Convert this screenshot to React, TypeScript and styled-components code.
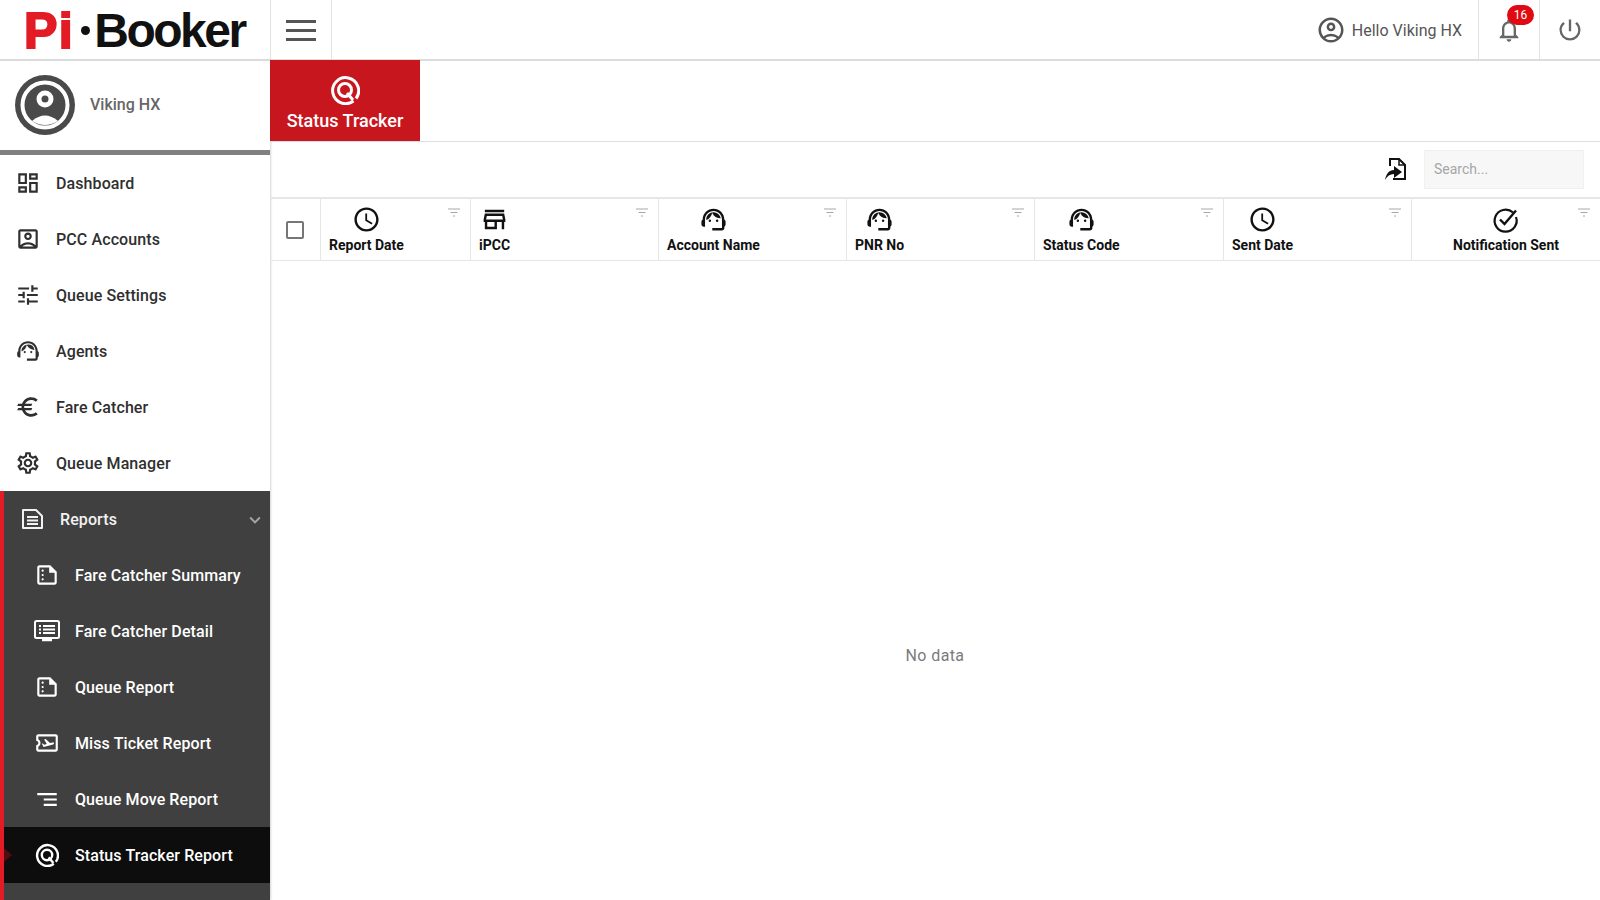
import styled, { createGlobalStyle } from 'styled-components'
import {
  MdOutlineAccountBox,
  MdOutlineAccountCircle,
  MdOutlineAirplaneTicket,
  MdOutlineDashboard,
  MdOutlineEuro,
  MdOutlineKeyboardArrowDown,
  MdOutlineNotifications,
  MdOutlinePowerSettingsNew,
  MdOutlineSchedule,
  MdOutlineSegment,
  MdOutlineSettings,
  MdOutlineStore,
  MdOutlineSummarize,
  MdOutlineSupportAgent,
  MdOutlineTune,
} from 'react-icons/md'
import type { ComponentType } from 'react'

type IconType = ComponentType<{ size?: number }>

const GlobalStyle = createGlobalStyle`
  html, body {
    margin: 0;
    height: 100%;
    overflow: hidden;
    background: #fff;
    font-family: Roboto, "Liberation Sans", sans-serif;
  }
  * { box-sizing: border-box; }
`

const Page = styled.div`
  width: 1600px;
  height: 900px;
  display: flex;
  flex-direction: column;
  overflow: hidden;
`

const Header = styled.header`
  height: 61px;
  flex: none;
  display: flex;
  align-items: stretch;
  border-bottom: 2px solid #dcdcdc;
  background: #fff;
`

const LogoCell = styled.div`
  width: 271px;
  display: flex;
  align-items: center;
  padding: 2px 0 0 24px;
  border-right: 1px solid #e2e2e2;
  font-family: "Liberation Sans", Arial, sans-serif;
  font-weight: 700;
`

const LogoRed = styled.span`
  color: #e31b25;
  font-size: 50px;
  letter-spacing: 1.5px;
  -webkit-text-stroke: 2px #e31b25;
`

const LogoDot = styled.span`
  width: 9px;
  height: 9px;
  margin: 0 4px 0 7px;
  border-radius: 50%;
  background: #111;
`

const LogoBlack = styled.span`
  color: #111;
  font-size: 48px;
  letter-spacing: -2.5px;
`

const MenuCell = styled.button`
  width: 61px;
  padding: 1px 0 0;
  border: 0;
  border-right: 1px solid #e2e2e2;
  background: none;
  display: flex;
  flex-direction: column;
  justify-content: center;
  align-items: center;
  gap: 6px;
`

const MenuBar = styled.span`
  width: 30px;
  height: 3px;
  background: #555;
`

const HeaderSpace = styled.div`
  flex: 1;
`

const Hello = styled.div`
  display: flex;
  align-items: center;
  gap: 6px;
  padding: 1px 16px 0 0;
  color: #555;
  font-size: 16px;
`

const HeaderCell = styled.div`
  position: relative;
  width: 61px;
  display: flex;
  align-items: center;
  justify-content: center;
  border-left: 1px solid #e2e2e2;
  color: #666;
`

const Badge = styled.span`
  position: absolute;
  top: 5px;
  left: 28px;
  width: 27px;
  height: 20px;
  border-radius: 10px;
  background: #e00b12;
  color: #fff;
  font-size: 12px;
  line-height: 20px;
  text-align: center;
`

const Body = styled.div`
  flex: 1;
  min-height: 0;
  display: flex;
`

const Sidebar = styled.aside`
  width: 270px;
  flex: none;
  display: flex;
  flex-direction: column;
  box-shadow: 1px 0 2px #d5d5d5;
  background: #fff;
`

const Profile = styled.div`
  height: 94px;
  flex: none;
  display: flex;
  align-items: center;
  gap: 15px;
  padding: 0 0 2px 15px;
  border-bottom: 5px solid #808080;
  color: #666;
  font-size: 16px;
  font-weight: 500;
`

const MenuList = styled.nav`
  flex: none;
`

const MenuItem = styled.div`
  height: 56px;
  display: flex;
  align-items: center;
  gap: 15px;
  padding-left: 15px;
  color: #2f2f2f;
  font-size: 16px;
  font-weight: 500;
  letter-spacing: 0.1px;
`

const ReportsGroup = styled.div`
  flex: 1;
  background: #404040;
  border-left: 4px solid #e31b25;
`

const ReportsHead = styled.div`
  position: relative;
  height: 56px;
  display: flex;
  align-items: center;
  gap: 15px;
  padding-left: 15px;
  color: #f2f2f2;
  font-size: 16px;
  font-weight: 500;
  letter-spacing: 0.1px;
`

const Chevron = styled.span`
  position: absolute;
  right: 4px;
  top: 18px;
  display: flex;
  color: #a5a5a5;
`

const SubItem = styled.div<{ $active?: boolean }>`
  position: relative;
  height: 56px;
  display: flex;
  align-items: center;
  gap: 15px;
  padding-left: 30px;
  background: ${props => (props.$active ? '#0d0d0d' : 'transparent')};
  color: #fff;
  font-size: 16px;
  font-weight: 500;
  letter-spacing: 0.1px;
  ${props =>
    props.$active &&
    `&::before {
      content: '';
      position: absolute;
      left: 0;
      top: 21px;
      border-style: solid;
      border-width: 7px 0 7px 8px;
      border-color: transparent transparent transparent #4f0d11;
    }`}
`

const IconBox = styled.span`
  width: 26px;
  display: flex;
  justify-content: center;
  flex: none;
`

const Main = styled.main`
  flex: 1;
  min-width: 0;
  display: flex;
  flex-direction: column;
`

const TabBar = styled.div`
  height: 81px;
  flex: none;
  border-bottom: 1px solid #dedede;
`

const ActiveTab = styled.div`
  width: 150px;
  height: 81px;
  margin-top: -1px;
  display: flex;
  flex-direction: column;
  align-items: center;
  justify-content: center;
  gap: 5px;
  padding-top: 5px;
  background: #c8161f;
  color: #fff;
  font-size: 18px;
  font-weight: 500;
`

const Toolbar = styled.div`
  height: 57px;
  flex: none;
  display: flex;
  align-items: center;
  justify-content: flex-end;
  gap: 17px;
  padding: 0 16px 1px 0;
  border-bottom: 2px solid #e6e6e6;
`

const ExportButton = styled.span`
  display: flex;
  color: #111;
`

const SearchInput = styled.input`
  width: 160px;
  height: 39px;
  padding: 0 9px;
  border: 1px solid #f0f0f0;
  outline: none;
  background: #f7f7f7;
  font-family: Roboto, sans-serif;
  font-size: 14px;
  &::placeholder {
    color: #a6a6a6;
  }
`

const TableHead = styled.div`
  height: 62px;
  flex: none;
  display: grid;
  grid-template-columns: 51px 150px 188px 188px 188px 189px 188px 188px;
  border-bottom: 1px solid #e6e6e6;
`

const CheckCell = styled.div`
  display: flex;
  align-items: center;
  justify-content: center;
  border-right: 1px solid #e6e6e6;
`

const CheckBox = styled.span`
  width: 18px;
  height: 18px;
  border: 2px solid #767676;
  border-radius: 2px;
`

const HeadCell = styled.div<{ $centered?: boolean }>`
  position: relative;
  display: flex;
  justify-content: ${props => (props.$centered ? 'center' : 'flex-start')};
  padding: 6px 8px 0;
  border-right: 1px solid #e6e6e6;
  &:last-child {
    border-right: 0;
  }
`

const HeadInner = styled.div`
  display: flex;
  flex-direction: column;
  align-items: center;
  gap: 3px;
  color: #111;
  font-size: 14px;
  font-weight: 700;
`

const FilterMark = styled.svg`
  position: absolute;
  top: 9px;
  right: 10px;
`

const EmptyState = styled.div`
  flex: 1;
  padding-top: 385px;
  text-align: center;
  color: #7b7b7b;
  font-size: 16px;
  letter-spacing: 0.4px;
`

const TrackerIcon = ({ size = 24 }: { size?: number }) => (
  <svg width={size} height={size} viewBox="0 0 30 30" fill="none" stroke="currentColor" strokeWidth="3">
    <path d="M26 23.5A13 13 0 1 0 23.5 26" />
    <circle cx="15" cy="15" r="6.5" />
    <path d="M17 18l6 7" />
  </svg>
)

const DetailIcon = ({ size = 26 }: { size?: number }) => (
  <svg width={size} height={size} viewBox="0 0 26 26" fill="none" stroke="currentColor" strokeWidth="2">
    <rect x="1" y="3" width="24" height="17" rx="1.5" />
    <path d="M9 8h12M9 11.5h12M9 15h12M5 8h2M5 11.5h2M5 15h2" />
    <path d="M8 22h10" strokeWidth="2.5" />
  </svg>
)

const ReportDocIcon = ({ size = 26 }: { size?: number }) => (
  <svg width={size} height={size} viewBox="0 0 26 26" fill="none" stroke="currentColor" strokeWidth="2" strokeLinejoin="round">
    <path d="M4 4h13l6 6v12H4z" />
    <path d="M8 11h11M8 14.5h11M8 18h11" />
  </svg>
)

const CheckSentIcon = ({ size = 29 }: { size?: number }) => (
  <svg width={size} height={size} viewBox="0 0 29 29" fill="none" stroke="currentColor">
    <path d="M22 7.5A11 11 0 1 0 25 12" strokeWidth="2.2" />
    <path d="M9 14.5l4.5 4.5L25 5.5" strokeWidth="2.4" />
  </svg>
)

const ExportIcon = () => (
  <svg width="22" height="24" viewBox="0 0 22 24" fill="none" stroke="currentColor" strokeWidth="2">
    <path d="M5 9V2h9l6 6v14H8" />
    <path d="M14 2v6h6" strokeWidth="1.5" />
    <path d="M0 23c1-6 4-10 9-10V9l8 6-8 6v-4c-4 0-7 2-9 6z" fill="currentColor" stroke="none" />
  </svg>
)

const AvatarIcon = () => (
  <svg width="60" height="60" viewBox="0 0 60 60">
    <circle cx="30" cy="30" r="30" fill="#4a4a4a" />
    <circle cx="30" cy="30" r="22.5" fill="none" stroke="#fff" strokeWidth="4" />
    <circle cx="30" cy="24" r="8.5" fill="#fff" />
    <circle cx="30" cy="24" r="3.5" fill="#4a4a4a" />
    <path d="M17 46Q30 35 43 46Q30 54 17 46Z" fill="#fff" />
  </svg>
)

const FilterIcon = () => (
  <FilterMark width="12" height="10" viewBox="0 0 12 10" stroke="#a8a8a8" strokeWidth="1">
    <path d="M0 1h12M2.5 4.5h7M5 8h2" />
  </FilterMark>
)

const mainMenu: { label: string; icon: IconType }[] = [
  { label: 'Dashboard', icon: MdOutlineDashboard },
  { label: 'PCC Accounts', icon: MdOutlineAccountBox },
  { label: 'Queue Settings', icon: MdOutlineTune },
  { label: 'Agents', icon: MdOutlineSupportAgent },
  { label: 'Fare Catcher', icon: MdOutlineEuro },
  { label: 'Queue Manager', icon: MdOutlineSettings },
]

const reportMenu: { label: string; icon: IconType; size: number; active?: boolean }[] = [
  { label: 'Fare Catcher Summary', icon: MdOutlineSummarize, size: 26 },
  { label: 'Fare Catcher Detail', icon: DetailIcon, size: 26 },
  { label: 'Queue Report', icon: MdOutlineSummarize, size: 26 },
  { label: 'Miss Ticket Report', icon: MdOutlineAirplaneTicket, size: 26 },
  { label: 'Queue Move Report', icon: MdOutlineSegment, size: 27 },
  { label: 'Status Tracker Report', icon: TrackerIcon, size: 24, active: true },
]

const columns: { label: string; icon: IconType; centered?: boolean }[] = [
  { label: 'Report Date', icon: MdOutlineSchedule },
  { label: 'iPCC', icon: MdOutlineStore },
  { label: 'Account Name', icon: MdOutlineSupportAgent },
  { label: 'PNR No', icon: MdOutlineSupportAgent },
  { label: 'Status Code', icon: MdOutlineSupportAgent },
  { label: 'Sent Date', icon: MdOutlineSchedule },
  { label: 'Notification Sent', icon: CheckSentIcon, centered: true },
]

export default function App() {
  return (
    <Page>
      <GlobalStyle />
      <Header>
        <LogoCell>
          <LogoRed>Pi</LogoRed>
          <LogoDot />
          <LogoBlack>Booker</LogoBlack>
        </LogoCell>
        <MenuCell aria-label="menu">
          <MenuBar />
          <MenuBar />
          <MenuBar />
        </MenuCell>
        <HeaderSpace />
        <Hello>
          <MdOutlineAccountCircle size={30} />
          Hello Viking HX
        </Hello>
        <HeaderCell>
          <MdOutlineNotifications size={28} />
          <Badge>16</Badge>
        </HeaderCell>
        <HeaderCell>
          <MdOutlinePowerSettingsNew size={28} />
        </HeaderCell>
      </Header>
      <Body>
        <Sidebar>
          <Profile>
            <AvatarIcon />
            Viking HX
          </Profile>
          <MenuList>
            {mainMenu.map(item => (
              <MenuItem key={item.label}>
                <IconBox>
                  <item.icon size={26} />
                </IconBox>
                {item.label}
              </MenuItem>
            ))}
          </MenuList>
          <ReportsGroup>
            <ReportsHead>
              <IconBox>
                <ReportDocIcon />
              </IconBox>
              Reports
              <Chevron>
                <MdOutlineKeyboardArrowDown size={22} />
              </Chevron>
            </ReportsHead>
            {reportMenu.map(item => (
              <SubItem key={item.label} $active={item.active}>
                <IconBox>
                  <item.icon size={item.size} />
                </IconBox>
                {item.label}
              </SubItem>
            ))}
          </ReportsGroup>
        </Sidebar>
        <Main>
          <TabBar>
            <ActiveTab>
              <TrackerIcon size={30} />
              Status Tracker
            </ActiveTab>
          </TabBar>
          <Toolbar>
            <ExportButton>
              <ExportIcon />
            </ExportButton>
            <SearchInput placeholder="Search..." />
          </Toolbar>
          <TableHead>
            <CheckCell>
              <CheckBox />
            </CheckCell>
            {columns.map(col => (
              <HeadCell key={col.label} $centered={col.centered}>
                <HeadInner>
                  <col.icon size={29} />
                  {col.label}
                </HeadInner>
                <FilterIcon />
              </HeadCell>
            ))}
          </TableHead>
          <EmptyState>No data</EmptyState>
        </Main>
      </Body>
    </Page>
  )
}
